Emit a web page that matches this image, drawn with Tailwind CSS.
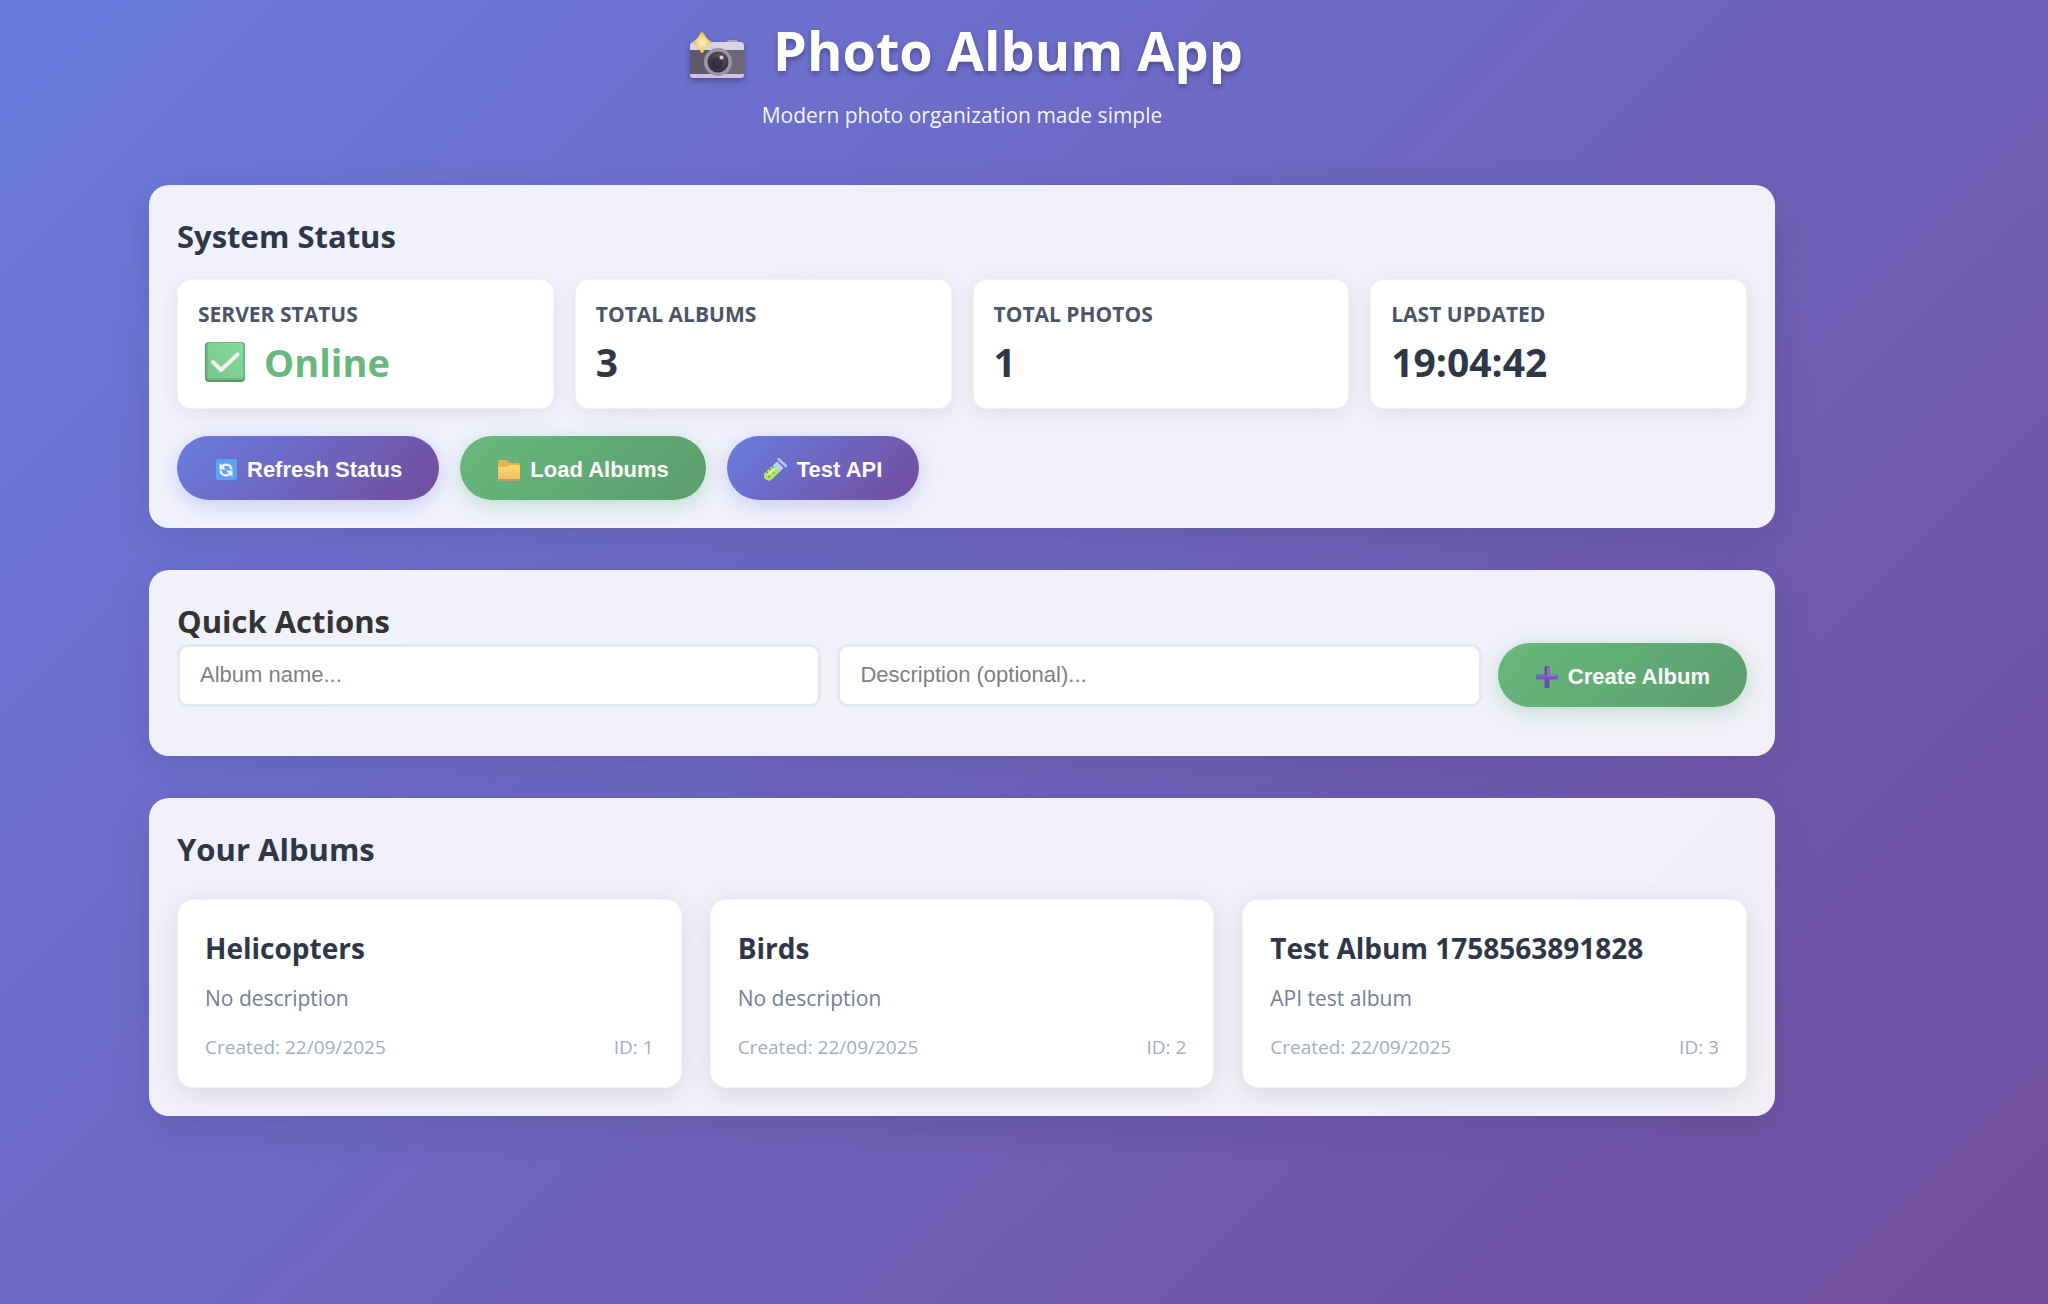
<!DOCTYPE html>
<html lang="en">
<head>
    <meta charset="UTF-8">
    <meta name="viewport" content="width=device-width, initial-scale=1.0">
    <title>Photo Album App</title>
    <script src="https://cdn.jsdelivr.net/npm/@tailwindcss/browser@4"></script>
</head>
<body class="min-h-screen bg-linear-[135deg,#6a7bdd,#714d9d] pr-[124px] font-['Open_Sans',sans-serif] text-[21px] leading-[30px] text-[#2d3748]">
    <div class="mx-auto max-w-[1626px] pt-[14px] pb-10">

        <header class="mb-[55px] text-center text-white">
            <h1 class="mb-[14px] flex items-center justify-center gap-5 text-[54px] leading-[72px] font-bold text-shadow-[0_3px_5px_rgb(0_0_0/0.3)]">
                <span class="flex w-[72px] justify-center pt-2.5">
                    <svg class="h-12 w-14 drop-shadow-[0_3px_3px_rgb(0_0_0/0.3)]" viewBox="0 0 56 48" aria-hidden="true">
                        <defs>
                            <radialGradient id="lens" cx="0.55" cy="0.35" r="0.7">
                                <stop offset="0" stop-color="#66586c"/>
                                <stop offset="1" stop-color="#2f2739"/>
                            </radialGradient>
                            <radialGradient id="flash">
                                <stop offset="0" stop-color="#fff3d0"/>
                                <stop offset="1" stop-color="#e6bf4c"/>
                            </radialGradient>
                        </defs>
                        <rect x="38" y="9" width="11" height="5" rx="2" fill="#a9a5b8"/>
                        <path d="M1 15q0-4 4-4h46q4 0 4 4v5H1z" fill="#d8d3e6"/>
                        <path d="M1 19h54v24H1z" fill="#6c6774"/>
                        <path d="M1 19h25v24H1z" fill="#5f5a68"/>
                        <path d="M1 43h54v1q0 3-3 3H4q-3 0-3-3z" fill="#d6bfe4"/>
                        <circle cx="29" cy="31" r="14" fill="#9997a5"/>
                        <circle cx="29" cy="31" r="10.5" fill="url(#lens)"/>
                        <circle cx="28" cy="32" r="6" fill="#292231" opacity="0.6"/>
                        <circle cx="32.500" cy="26.500" r="2" fill="#d8d0dc"/>
                        <path d="M13 1q1 0 1.500 1 2 5 7.500 8.500 1 1 0 2Q16.500 16 14.500 21q-.5 1-1.500 1t-1.500-1Q9.500 16 4 12.500q-1-1 0-2Q9.500 7 11.500 2q.5-1 1.500-1z" fill="url(#flash)"/>
                    </svg>
                </span>
                Photo Album App
            </h1>
            <p class="text-white/95">Modern photo organization made simple</p>
        </header>

        <main class="flex flex-col gap-[42px]">

            <!-- System status -->
            <section class="rounded-[20px] border border-white/20 bg-white/90 px-[27px] pt-[29px] pb-[27px] shadow-[0_10px_40px_rgb(0_0_0/0.1)]">
                <h2 class="mb-[21px] text-[31px] leading-[43px] font-bold">System Status</h2>
                <div class="grid grid-cols-4 gap-[21px]">
                    <div class="rounded-[14px] border border-black/5 bg-white p-5 shadow-[0_4px_20px_rgb(0_0_0/0.08)]">
                        <h3 class="mb-2 leading-[28px] font-bold text-[#4a5568]">SERVER STATUS</h3>
                        <div class="flex items-center gap-3 text-[38px] leading-[52px] font-bold text-[#68b87e]">
                            <span class="flex w-[54px] justify-center">
                                <svg class="size-10" viewBox="0 0 40 40" aria-hidden="true">
                                    <defs>
                                        <linearGradient id="tick" x1="0" y1="1" x2="1" y2="0">
                                            <stop offset="0" stop-color="#77c88a"/>
                                            <stop offset="1" stop-color="#84dc9c"/>
                                        </linearGradient>
                                    </defs>
                                    <rect width="40" height="40" rx="4" fill="#57976a"/>
                                    <rect x="1" y="0" width="39" height="38" rx="4" fill="#6dbb82"/>
                                    <rect x="3" y="1" width="35" height="35" rx="3" fill="url(#tick)"/>
                                    <path d="M8 20l8 8 16.500-15.500" fill="none" stroke="#f4eef8" stroke-width="4" stroke-linecap="round" stroke-linejoin="round"/>
                                </svg>
                            </span>
                            Online
                        </div>
                    </div>
                    <div class="rounded-[14px] border border-black/5 bg-white p-5 shadow-[0_4px_20px_rgb(0_0_0/0.08)]">
                        <h3 class="mb-2 leading-[28px] font-bold text-[#4a5568]">TOTAL ALBUMS</h3>
                        <div class="text-[39px] leading-[52px] font-bold">3</div>
                    </div>
                    <div class="rounded-[14px] border border-black/5 bg-white p-5 shadow-[0_4px_20px_rgb(0_0_0/0.08)]">
                        <h3 class="mb-2 leading-[28px] font-bold text-[#4a5568]">TOTAL PHOTOS</h3>
                        <div class="text-[39px] leading-[52px] font-bold">1</div>
                    </div>
                    <div class="rounded-[14px] border border-black/5 bg-white p-5 shadow-[0_4px_20px_rgb(0_0_0/0.08)]">
                        <h3 class="mb-2 leading-[28px] font-bold text-[#4a5568]">LAST UPDATED</h3>
                        <div class="text-[39px] leading-[52px] font-bold">19:04:42</div>
                    </div>
                </div>

                <div class="mt-[27px] flex flex-wrap gap-[21px] font-['Liberation_Sans',sans-serif] text-[22px] font-bold text-white">
                    <button type="button" class="flex h-16 items-center gap-1.5 rounded-full bg-linear-[135deg,#697de0,#714c9c] pt-[3px] pr-[37px] pl-[34px] shadow-[0_5px_20px_rgb(102_126_234/0.3)]">
                        <span class="flex w-[30px] justify-center">
                            <svg class="size-[22px]" viewBox="0 0 22 22" aria-hidden="true">
                                <rect width="22" height="22" rx="2" fill="#4f7fd4"/>
                                <rect x="1" width="21" height="21" rx="2" fill="#5fa2f0"/>
                                <g fill="none" stroke="#f1f4ff" stroke-width="2.200">
                                    <path d="M16.500 10.500C16 5.500 10 4 6.800 7.500"/>
                                    <path d="M5.500 11.500C6 16.500 12 18 15.200 14.500"/>
                                </g>
                                <path d="M4.500 4v6.500H11z" fill="#f1f4ff"/>
                                <path d="M17.500 18v-6.500H11z" fill="#f1f4ff"/>
                            </svg>
                        </span>
                        Refresh Status
                    </button>
                    <button type="button" class="flex h-16 items-center gap-1.5 rounded-full bg-linear-[135deg,#68b87e,#5a9e6c] pt-[3px] pr-[37px] pl-[34px] shadow-[0_5px_20px_rgb(72_187_120/0.3)]">
                        <span class="flex w-[30px] justify-center">
                            <svg class="size-[22px]" viewBox="0 0 22 22" aria-hidden="true">
                                <defs>
                                    <linearGradient id="folder" x1="0" y1="0" x2="0" y2="1">
                                        <stop offset="0" stop-color="#fbdc6a"/>
                                        <stop offset="1" stop-color="#f2bb62"/>
                                    </linearGradient>
                                </defs>
                                <path d="M0 3q0-2 2-2h6q1 0 2 1l2 2h8q2 0 2 2v14H0z" fill="#efb14c"/>
                                <path d="M0 8h9l3-2h8q2 0 2 2v11q0 2-2 2H2q-2 0-2-2z" fill="url(#folder)"/>
                                <path d="M0 20h22q0 2-2 2H2q-2 0-2-2z" fill="#c89a62"/>
                            </svg>
                        </span>
                        Load Albums
                    </button>
                    <button type="button" class="flex h-16 items-center gap-1.5 rounded-full bg-linear-[135deg,#697de0,#714c9c] pt-[3px] pr-[37px] pl-[34px] shadow-[0_5px_20px_rgb(102_126_234/0.3)]">
                        <span class="flex w-[30px] justify-center">
                            <svg class="size-[23px]" viewBox="0 0 23 23" aria-hidden="true">
                                <path d="M13 3.500l6.500 6.500L7.500 21.500q-3 2-6-.5-2.500-3-.5-6z" fill="#b5d8f2"/>
                                <path d="M7 9l10 3.500L7.500 21.500q-3 2-6-.5-2.500-3-.5-6z" fill="#b4e65c"/>
                                <path d="M4 16.500l6-5.500" stroke="#e2f8a4" stroke-width="2" stroke-linecap="round"/>
                                <path d="M14.500 1l7.500 7" stroke="#a9cdf0" stroke-width="2.500" stroke-linecap="round"/>
                                <path d="M2 13.500l2 1.500M5 10.500l2 1.500M8 8l1.500 1.500" stroke="#4e9a4a" stroke-width="1.500"/>
                                <circle cx="5" cy="18.500" r="1.200" fill="#6fb83e"/>
                                <circle cx="10" cy="15" r="1" fill="#6fb83e"/>
                            </svg>
                        </span>
                        Test API
                    </button>
                </div>
            </section>

            <!-- Quick actions -->
            <section class="rounded-[20px] border border-white/20 bg-white/90 px-[27px] pt-[29px] pb-12 shadow-[0_10px_40px_rgb(0_0_0/0.1)]">
                <h2 class="text-[31px] leading-[43px] font-bold text-[#333333]">Quick Actions</h2>
                <form class="flex items-center gap-4 font-['Liberation_Sans',sans-serif] text-[22px]">
                    <input type="text" aria-label="Album name" placeholder="Album name..." class="h-[63px] min-w-0 flex-1 rounded-[11px] border-3 border-[#e2e8f0] bg-white px-5 placeholder:text-[#808080]">
                    <input type="text" aria-label="Description" placeholder="Description (optional)..." class="h-[63px] min-w-0 flex-1 rounded-[11px] border-3 border-[#e2e8f0] bg-white px-5 placeholder:text-[#808080]">
                    <button type="button" class="flex h-16 items-center gap-1.5 rounded-full bg-linear-[135deg,#68b87e,#5a9e6c] pt-[3px] pr-[37px] pl-[34px] font-bold text-white shadow-[0_5px_20px_rgb(72_187_120/0.3)]">
                        <span class="flex w-[30px] justify-center">
                            <svg class="size-[22px]" viewBox="0 0 22 22" aria-hidden="true">
                                <rect x="8.500" width="5" height="22" rx="1.500" fill="#6c4bb0"/>
                                <rect y="8.500" width="22" height="5" rx="1.500" fill="#7a50c4"/>
                                <path d="M12 1.500v8h8.500" fill="none" stroke="#9a80d0" stroke-width="1.500" stroke-linecap="round"/>
                                <path d="M1.500 10H9" stroke="#8d70c8" stroke-width="1.200" stroke-linecap="round"/>
                            </svg>
                        </span>
                        Create Album
                    </button>
                </form>
            </section>

            <!-- Albums -->
            <section class="rounded-[20px] border border-white/20 bg-white/90 px-[27px] pt-[29px] pb-[27px] shadow-[0_10px_40px_rgb(0_0_0/0.1)]">
                <h2 class="mb-7 text-[31px] leading-[43px] font-bold">Your Albums</h2>
                <div class="grid grid-cols-3 gap-7">
                    <article class="rounded-2xl border border-black/5 bg-white p-[27px] shadow-[0_5px_26px_rgb(0_0_0/0.1)]">
                        <h3 class="mb-[14px] text-[28px] leading-[42px] font-bold">Helicopters</h3>
                        <p class="text-[#718096]">No description</p>
                        <div class="mt-[22px] flex justify-between text-[19px] leading-[25px] text-[#a0aec0]">
                            <span>Created: 22/09/2025</span>
                            <span>ID: 1</span>
                        </div>
                    </article>
                    <article class="rounded-2xl border border-black/5 bg-white p-[27px] shadow-[0_5px_26px_rgb(0_0_0/0.1)]">
                        <h3 class="mb-[14px] text-[28px] leading-[42px] font-bold">Birds</h3>
                        <p class="text-[#718096]">No description</p>
                        <div class="mt-[22px] flex justify-between text-[19px] leading-[25px] text-[#a0aec0]">
                            <span>Created: 22/09/2025</span>
                            <span>ID: 2</span>
                        </div>
                    </article>
                    <article class="rounded-2xl border border-black/5 bg-white p-[27px] shadow-[0_5px_26px_rgb(0_0_0/0.1)]">
                        <h3 class="mb-[14px] text-[28px] leading-[42px] font-bold">Test Album 1758563891828</h3>
                        <p class="text-[#718096]">API test album</p>
                        <div class="mt-[22px] flex justify-between text-[19px] leading-[25px] text-[#a0aec0]">
                            <span>Created: 22/09/2025</span>
                            <span>ID: 3</span>
                        </div>
                    </article>
                </div>
            </section>
        </main>
    </div>
</body>
</html>
